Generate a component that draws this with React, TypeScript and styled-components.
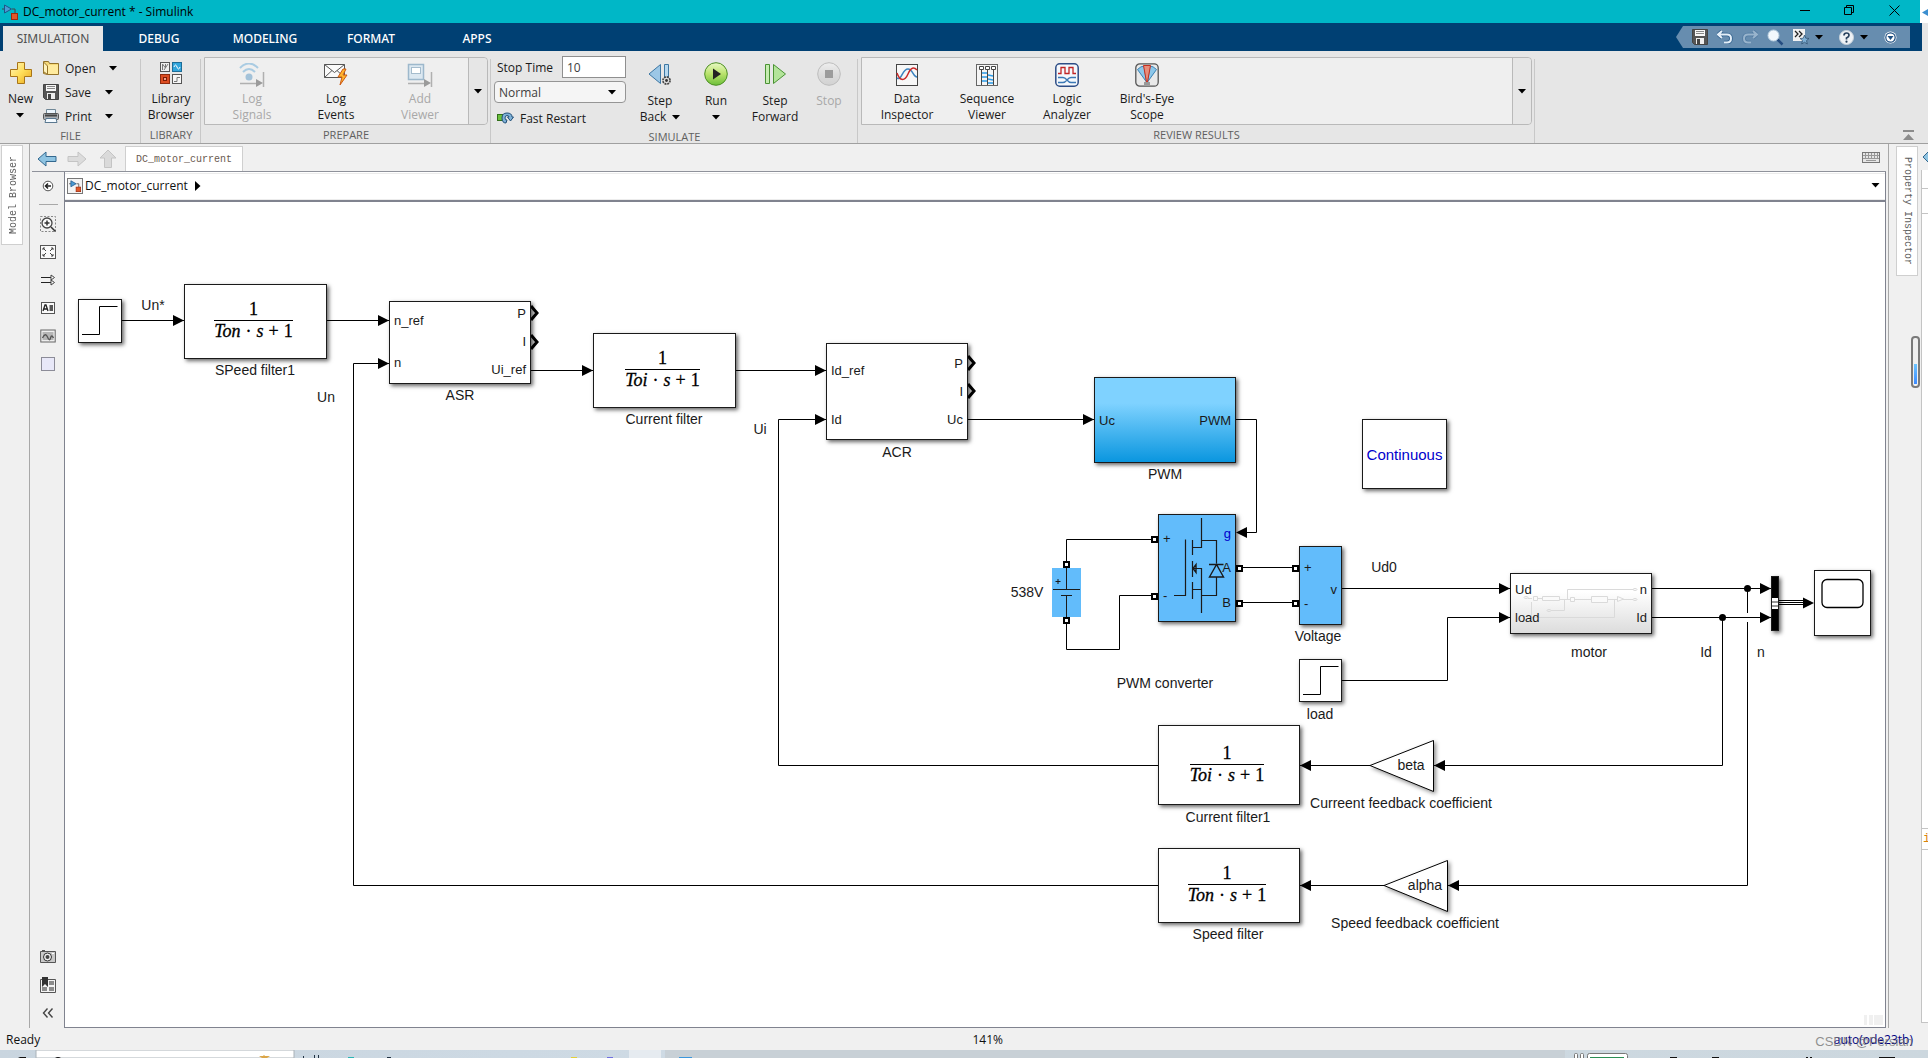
import React from "react";
import styled, { createGlobalStyle } from "styled-components";

const UI = '"Open Sans", "Noto Sans", sans-serif';
const MONO = '"Liberation Mono", monospace';
const SANS = '"Liberation Sans", Arial, sans-serif';
const SERIF = '"Liberation Serif", "Times New Roman", serif';

const Global = createGlobalStyle`
  *, *::before, *::after { box-sizing: border-box; }
  html, body { margin: 0; padding: 0; overflow: hidden; }
  body { font-family: ${UI}; font-size: 12px; color: #1a1a1a; background: #f0f0f0; }
  button, input, select { font: inherit; color: inherit; margin: 0; }
  button { padding: 0; border: 0; background: none; cursor: default; }
  svg { display: block; flex: none; }
`;

/* ---------- shell ---------- */

const Desktop = styled.div`
  display: flex;
  flex-direction: column;
  height: 100vh;
  overflow: hidden;
`;

const Windows = styled.div`
  display: flex;
  flex: 1;
  min-height: 0;
`;

const AppWindow = styled.main`
  display: flex;
  flex-direction: column;
  flex: 1;
  min-width: 0;
  background: #f0f0f0;
`;

const TitleBar = styled.header`
  display: flex;
  align-items: center;
  height: 23px;
  flex: none;
  padding-left: 2px;
  gap: 5px;
  background: #00b7c7;
  color: #000;
`;

const WindowTitle = styled.h1`
  flex: 1;
  margin: 0;
  font-size: 12px;
  line-height: 20px;
  font-weight: 400;
`;

const WindowButton = styled.button`
  display: flex;
  align-items: center;
  justify-content: center;
  width: 45px;
  height: 20px;
  align-self: flex-start;
`;

const WindowButtons = styled.div`
  display: flex;
  height: 23px;
  padding-right: 3px;
`;

const TabBar = styled.div`
  display: flex;
  align-items: flex-end;
  height: 28px;
  flex: none;
  padding: 0 10px 0 3px;
  gap: 6px;
  background: #004073;
`;

const Tab = styled.button<{ $active?: boolean }>`
  width: 100px;
  height: 25px;
  line-height: 23px;
  font-family: "Noto Sans", sans-serif;
  font-size: 12px;
  font-weight: ${(p) => (p.$active ? 400 : 500)};
  color: ${(p) => (p.$active ? "#505050" : "#fff")};
  background: ${(p) => (p.$active ? "#e6e6e6" : "transparent")};
`;

const Spacer = styled.div`
  flex: 1;
`;

const QuickAccess = styled.div`
  display: flex;
  align-items: center;
  align-self: center;
  height: 22px;
  padding: 0 13px 0 16px;
  gap: 9px;
  background: #678daf;
  clip-path: polygon(7px 0, 100% 0, 100% 100%, 7px 100%, 0 50%);
`;

const QuickButton = styled.button<{ $split?: boolean }>`
  display: flex;
  align-items: center;
  gap: 6px;
  padding-right: ${(p) => (p.$split ? "7px" : "0")};
`;

/* ---------- ribbon ---------- */

const Ribbon = styled.div`
  display: flex;
  height: 93px;
  flex: none;
  background: #e6e6e6;
  border-bottom: 1px solid #a0a0a0;
`;

const Section = styled.section<{ $width: number }>`
  display: flex;
  flex-direction: column;
  width: ${(p) => p.$width}px;
  padding-top: 5px;
  background: linear-gradient(#c8c8c8, #c8c8c8) right 8px / 1px 100% no-repeat;
`;

const SectionBody = styled.div<{ $pad?: number }>`
  display: flex;
  height: 73px;
  padding: 0 ${(p) => p.$pad ?? 0}px;
`;

const SectionTitle = styled.h2`
  margin: 0;
  text-align: center;
  font-size: 11px;
  line-height: 16px;
  font-weight: 400;
  color: #606060;
`;

const BigButton = styled.button<{ $width: number; $low?: boolean }>`
  display: flex;
  flex-direction: column;
  align-items: center;
  width: ${(p) => p.$width}px;
  padding-top: ${(p) => (p.$low ? "6px" : "4px")};
  gap: ${(p) => (p.$low ? "7px" : "4px")};
  line-height: 16px;
  color: #1a1a1a;
  &:disabled { color: #a8a8a8; }
`;

const BigLabel = styled.span`
  display: flex;
  flex-direction: column;
  align-items: center;
  white-space: nowrap;
`;

const LabelRow = styled.span`
  display: flex;
  align-items: center;
  justify-content: center;
  gap: 6px;
  height: 16px;
`;

const FileList = styled.div`
  display: flex;
  flex-direction: column;
  margin-left: 2px;
`;

const FileRow = styled.div<{ $wide?: boolean }>`
  display: grid;
  grid-template-columns: ${(p) => (p.$wide ? 66 : 62)}px 16px;
  align-items: center;
  height: 24px;
`;

const SmallButton = styled.button`
  display: flex;
  align-items: center;
  gap: 6px;
  height: 24px;
  text-align: left;
`;

const Gallery = styled.div`
  display: flex;
  flex: 1;
  height: 68px;
  margin-top: 1px;
  border: 1px solid #b9b9b9;
  border-radius: 0 4px 4px 0;
  background: #efefef;
`;

const GalleryItems = styled.div`
  display: flex;
  flex: 1;
  padding: 1px 5px 0;
`;

const GalleryMore = styled.button`
  display: flex;
  align-items: center;
  justify-content: center;
  width: 19px;
  border-left: 1px solid #b9b9b9;
  background: #e6e6e6;
  border-radius: 0 4px 4px 0;
`;

const SimForm = styled.div`
  display: flex;
  flex-direction: column;
  width: 132px;
  margin-right: 4px;
  gap: 3px;
`;

const StopRow = styled.div`
  display: flex;
  align-items: center;
  justify-content: space-between;
  padding-left: 3px;
`;

const StopInput = styled.input`
  width: 64px;
  height: 22px;
  padding: 0 4px;
  border: 1px solid #8f8f8f;
  background: #fff;
  color: #404040;
`;

const SelectWrap = styled.div`
  display: grid;
  grid-template-columns: 1fr 18px;
  align-items: center;
  height: 22px;
  svg { grid-area: 1 / 2; pointer-events: none; }
`;

const ModeSelect = styled.select`
  grid-area: 1 / 1 / 2 / 3;
  height: 22px;
  padding: 0 4px;
  appearance: none;
  border: 1px solid #959595;
  border-radius: 4px;
  background: #f5f5f5;
  color: #404040;
`;

const CollapseButton = styled.button`
  align-self: flex-end;
  padding: 0 6px 3px 0;
`;

/* ---------- workspace ---------- */

const Workspace = styled.div`
  display: flex;
  flex: 1;
  min-height: 0;
`;

const Rail = styled.aside<{ $side: "left" | "right" }>`
  display: flex;
  width: ${(p) => (p.$side === "left" ? 30 : 32)}px;
  flex: none;
  padding: ${(p) => (p.$side === "left" ? "1px 0 0 1px" : "2px 0 0 7px")};
  border-${(p) => (p.$side === "left" ? "right" : "left")}: 1px solid #a8a8a8;
`;

const RailTab = styled.button<{ $up?: boolean }>`
  width: 22px;
  height: ${(p) => (p.$up ? 100 : 130)}px;
  padding-right: ${(p) => (p.$up ? 4 : 0)}px;
  border: 1px solid #cfcfcf;
  background: #fff;
  font-family: ${MONO};
  font-size: 10px;
  line-height: 16px;
  color: #606060;
  writing-mode: vertical-rl;
  rotate: ${(p) => (p.$up ? "180deg" : "0deg")};
`;

const Center = styled.div`
  display: flex;
  flex-direction: column;
  flex: 1;
  min-width: 0;
  padding: 0 2px;
`;

const NavRow = styled.div`
  display: flex;
  align-items: flex-end;
  height: 28px;
  flex: none;
  padding: 0 6px 0 5px;
  border-bottom: 1px solid #8f929b;
`;

const NavButton = styled.button<{ $w: number }>`
  display: flex;
  align-items: center;
  width: ${(p) => p.$w}px;
  height: 24px;
`;

const DocTab = styled.button`
  width: 118px;
  height: 25px;
  border: 1px solid #cfcfcf;
  border-bottom: 0;
  background: #fff;
  font-family: ${MONO};
  font-size: 10px;
  color: #6a5a50;
`;

const KeyboardButton = styled.button`
  align-self: center;
`;

const EditorRow = styled.div`
  display: flex;
  flex: 1;
  min-height: 0;
`;

const Palette = styled.div`
  display: flex;
  flex-direction: column;
  align-items: center;
  width: 32px;
  flex: none;
  padding-bottom: 1px;
`;

const PaletteButton = styled.button`
  display: flex;
  align-items: center;
  justify-content: center;
  width: 28px;
  height: 28px;
`;

const PaletteRule = styled.hr`
  width: 19px;
  margin: 4px 0 5px;
  border: 0;
  border-top: 1px solid #a8a8a8;
`;

const Editor = styled.div`
  display: flex;
  flex-direction: column;
  flex: 1;
  min-width: 0;
  border: 1px solid #80838f;
  border-top: 0;
`;

const Crumbs = styled.nav`
  display: flex;
  align-items: center;
  height: 30px;
  flex: none;
  padding: 0 5px 1px 2px;
  gap: 2px;
  background: #fff;
  border-bottom: 2px solid #80838f;
  box-shadow: inset 0 1px 0 #fff, inset 0 2px 0 #ececec, inset 0 -1px 0 #ececec;
`;

const Crumb = styled.a`
  margin-right: 5px;
  color: #101010;
  text-decoration: none;
  font-size: 12px;
`;

const StatusBar = styled.footer`
  display: grid;
  grid-template-columns: 102fr 100fr;
  align-items: center;
  height: 22px;
  flex: none;
  padding-left: 6px;
  color: #101010;
`;

const StatusEnd = styled.div`
  display: flex;
  justify-content: space-between;
  position: relative;
  padding-right: 7px;
`;

const Solver = styled.a`
  color: #000080;
  text-decoration: none;
`;

const Watermark = styled.span`
  position: absolute;
  right: 7px;
  top: 4px;
  font-family: ${SANS};
  font-size: 13px;
  line-height: 14px;
  color: rgba(110, 110, 110, 0.75);
`;

/* ---------- diagram ---------- */

const SCROLL = { x: 65, y: 202 };

const Canvas = styled.div`
  position: relative;
  flex: 1;
  min-height: 0;
  overflow: hidden;
  background: #fff;
  font-family: ${SANS};
  color: #1a1a1a;
`;

const WireLayer = styled.svg`
  position: absolute;
  left: 0;
  top: 0;
`;

const ResizeGrip = styled.svg`
  position: absolute;
  right: 2px;
  bottom: 2px;
`;

type BoxProps = { $x: number; $y: number; $w: number; $h: number; $fill?: string; $frameless?: boolean };

const Block = styled.div<BoxProps>`
  position: absolute;
  left: ${(p) => p.$x - SCROLL.x}px;
  top: ${(p) => p.$y - SCROLL.y}px;
  width: ${(p) => p.$w}px;
  height: ${(p) => p.$h}px;
  display: flex;
  align-items: center;
  justify-content: center;
  background: ${(p) => p.$fill ?? "#fff"};
  border: ${(p) => (p.$frameless ? "0" : "1px solid #1a1a1a")};
  box-shadow: ${(p) => (p.$frameless ? "none" : "2px 2px 4px rgba(0, 0, 0, 0.6)")};
`;

const Label = styled.span<{ $x: number; $y: number }>`
  position: absolute;
  left: ${(p) => p.$x - SCROLL.x}px;
  top: ${(p) => p.$y - SCROLL.y}px;
  transform: translate(-50%, -50%);
  font-size: 14px;
  line-height: 16px;
  white-space: nowrap;
`;

const Port = styled.span<{ $y: number; $out?: boolean; $blue?: boolean }>`
  position: absolute;
  ${(p) => (p.$out ? "right" : "left")}: 4px;
  top: ${(p) => p.$y - 8}px;
  font-size: 13px;
  line-height: 16px;
  color: ${(p) => (p.$blue ? "#0000cc" : "inherit")};
`;

const Annotation = styled.span`
  font-size: 15px;
  color: #0000cc;
`;

const Fraction = styled.div`
  display: flex;
  flex-direction: column;
  align-items: center;
  padding: 0 4px 4px 0;
  font-family: ${SERIF};
  font-size: 18px;
  line-height: 22px;
  color: #000;
  -webkit-text-stroke: 0.3px #000;
`;

const Denominator = styled.div`
  display: flex;
  gap: 5px;
  line-height: 20px;
  border-top: 1px solid #000;
`;

const Overlay = styled.svg`
  position: absolute;
  left: 0;
  top: 0;
`;

/* ---------- neighbours of the window ---------- */

const Neighbour = styled.div`
  display: flex;
  flex-direction: column;
  width: 8px;
  flex: none;
  overflow: hidden;
  background: #f0f0f0;
`;

const Strip = styled.div<{ $h: number; $bg: string }>`
  height: ${(p) => p.$h}px;
  flex: none;
  background: ${(p) => p.$bg};
`;

const NeighbourPane = styled.div<{ $grow?: boolean; $h?: number }>`
  ${(p) => (p.$grow ? "flex: 1;" : `height: ${p.$h}px;`)}
  margin-left: 1px;
  padding-left: 1px;
  border-left: 1px solid #c4c4c4;
  border-bottom: 1px solid #c4c4c4;
  background: #fff;
  font-family: ${MONO};
  font-size: 12px;
  line-height: 20px;
  color: #d9820a;
`;

const Grip = styled.div`
  position: absolute;
  right: 8px;
  top: 336px;
  width: 9px;
  height: 52px;
  padding: 26px 1px 2px;
  border: 2px solid #7a7a7a;
  border-radius: 4px;
  background: #f0f0f0;
  &::before { content: ""; display: block; height: 20px; background: linear-gradient(#6cc4ff, #3d8bff); }
`;

const TaskBar = styled.div`
  display: flex;
  height: 8px;
  flex: none;
  overflow: hidden;
  background: linear-gradient(90deg, #c9d5df, #cfdbe5 40%, #ccd7de);
`;

/* ---------- icons ---------- */

const Caret = ({ w = 8 }: { w?: number }) => (
  <svg width={w} height="5" viewBox="0 0 8 5"><path d="M0 0h8L4 4.500z" fill="#000" /></svg>
);

const ModelIcon = ({ framed }: { framed?: boolean }) => (
  <svg width="16" height="16" viewBox="0 0 16 16">
    {framed && <rect x=".5" y=".5" width="15" height="15" fill="#f4f4f4" stroke="#777" />}
    <g transform={framed ? "translate(2 2) scale(.75)" : undefined}>
      <path d="M0 5h3M10 5h3v5" fill="none" stroke="#444" />
      <path d="M2.500 1v8L9.500 5z" fill="#4a9bd4" stroke="#1d5688" />
      <rect x="9.500" y="9.500" width="6" height="6" fill="#e0592a" stroke="#a02a0c" />
    </g>
  </svg>
);

const PlusIcon = () => (
  <svg width="22" height="22" viewBox="0 0 22 22">
    <defs><linearGradient id="gold" x1="0" y1="0" x2="1" y2="1"><stop offset="0" stopColor="#fff6c0" /><stop offset=".5" stopColor="#ffdf5a" /><stop offset="1" stopColor="#e8a51d" /></linearGradient></defs>
    <path d="M7.500 .5h7v7h7v7h-7v7h-7v-7h-7v-7h7z" fill="url(#gold)" stroke="#a87518" />
  </svg>
);

const FolderIcon = () => (
  <svg width="16" height="14" viewBox="0 0 16 14">
    <path d="M.5 12.500V.5h5l1 2h9v11h-11z" fill="#f5d97a" stroke="#94732a" />
    <path d="M.5 1l4 4v8.500l-4-3z" fill="#fff3bd" stroke="#94732a" /><path d="M5 4h10v9H5z" fill="#ffeb9e" />
  </svg>
);

const DiskIcon = () => (
  <svg width="16" height="16" viewBox="0 0 16 16">
    <path d="M.5.5h15v15h-13l-2-2z" fill="#555" stroke="#444" />
    <rect x="3" y="1" width="10" height="6" fill="#f7f7f7" /><path d="M4 2.500h8M4 4.500h8" stroke="#888" />
    <rect x="4" y="9" width="8" height="6" fill="#eee" /><rect x="5" y="10" width="3" height="5" fill="#444" />
  </svg>
);

const PrintIcon = () => (
  <svg width="16" height="14" viewBox="0 0 16 14">
    <path d="M3.500 5V.5h9V5" fill="#eaf4fc" stroke="#6f8796" />
    <rect x=".5" y="4.500" width="15" height="6" rx="1" fill="#a9adb2" stroke="#555" /><path d="M2 6.500h12" stroke="#444" strokeWidth="2" />
    <path d="M3 9.500h10l1 4H2z" fill="#f4faff" stroke="#5a7890" />
  </svg>
);

const LibraryIcon = () => (
  <svg width="22" height="22" viewBox="0 0 22 22">
    <rect x=".5" y=".5" width="9" height="9" fill="#eee" stroke="#555" /><path d="M2.500 8V2l3 4V2M8 2L4 8" fill="none" stroke="#777" />
    <rect x="12.500" y=".5" width="9" height="9" fill="#31a5dc" stroke="#1c6c97" /><path d="M14 5q1.500-4 3 0t3 0" fill="none" stroke="#fff" />
    <rect x=".5" y="12.500" width="9" height="9" fill="#dd4d22" stroke="#8f2b0e" /><rect x="3.500" y="15.500" width="3" height="3" fill="#f5a08a" stroke="#7d1c05" />
    <rect x="12.500" y="12.500" width="9" height="9" fill="#f6f6f6" stroke="#555" /><path d="M14 19.500h3v-4h3" fill="none" stroke="#777" />
  </svg>
);

const LogSignalsIcon = () => (
  <svg width="26" height="24" viewBox="0 0 26 24" fill="none">
    <circle cx="10" cy="14" r="3.500" fill="#a3c2d9" />
    <path d="M4 9q6-6 12 0M1 5q9-9 18 0" stroke="#a9cbe2" strokeWidth="2" />
    <path d="M1 20.500h17M24.500 9v15" stroke="#b0b0b0" strokeWidth="1.500" /><path d="M17 16v8l7-4z" fill="#9b9b9b" />
  </svg>
);

const LogEventsIcon = () => (
  <svg width="26" height="24" viewBox="0 0 26 24">
    <path d="M1.500 1.500h20v13h-20z" fill="#fafafa" stroke="#555" /><path d="M1.500 1.500l10 8 10-8M1.500 14.500l7.500-7M21.500 14.500l-7.500-7" fill="none" stroke="#555" />
    <path d="M20 6l-5 8h4l-2 8 7-10h-4l3-6z" fill="#ffb52e" stroke="#cc5a14" />
  </svg>
);

const AddViewerIcon = () => (
  <svg width="26" height="24" viewBox="0 0 26 24" fill="none">
    <rect x="1.500" y="1.500" width="15" height="15" fill="#dce8f1" stroke="#9db8cc" strokeWidth="1.500" /><rect x="4.500" y="4.500" width="9" height="6" fill="#fff" stroke="#a5bccd" />
    <path d="M1 20.500h17M24.500 9v15" stroke="#b0b0b0" strokeWidth="1.500" /><path d="M17 16v8l7-4z" fill="#9b9b9b" />
  </svg>
);

const FastRestartIcon = () => (
  <svg width="17" height="12" viewBox="0 0 17 12">
    <rect x=".5" y="2.500" width="5" height="6" fill="#6cc03c" stroke="#32701a" />
    <path d="M5 6q0-5 5-5 5 0 5 4h1.500l-3 4-3-4H12q0-1.500-2-1.500T8 6t2 2l-1 3Q5 11 5 6z" fill="#7fb2d8" stroke="#235078" />
  </svg>
);

const StepBackIcon = () => (
  <svg width="24" height="24" viewBox="0 0 24 24">
    <path d="M12.500 2.500v19L1 12z" fill="#9cc7e6" stroke="#3d77a3" /><path d="M16.500 2.500h4v14h-4z" fill="#b7d8ef" stroke="#3d77a3" />
    <circle cx="18.500" cy="18.500" r="3.600" fill="#ddd" stroke="#444" strokeWidth="1.600" strokeDasharray="2 .8" /><circle cx="18.500" cy="18.500" r="1.400" fill="#333" />
  </svg>
);

const RunIcon = ({ off }: { off?: boolean }) => (
  <svg width="24" height="24" viewBox="0 0 24 24">
    <defs>
      <linearGradient id={off ? "ballOff" : "ballOn"} x1="0" y1="0" x2="0" y2="1">
        <stop offset="0" stopColor={off ? "#eee" : "#e9f9c4"} /><stop offset=".5" stopColor={off ? "#dcdcdc" : "#b9e26b"} /><stop offset="1" stopColor={off ? "#d2d2d2" : "#6cbf3a"} />
      </linearGradient>
    </defs>
    <circle cx="12" cy="12" r="11.300" fill={off ? "url(#ballOff)" : "url(#ballOn)"} stroke={off ? "#bdbdbd" : "#4d8f24"} />
    {off ? <rect x="8" y="8" width="8" height="8" fill="#9c9c9c" /> : <path d="M9 6.500v11l8-5.500z" fill="#222" />}
  </svg>
);

const StepForwardIcon = () => (
  <svg width="24" height="24" viewBox="0 0 24 24">
    <path d="M2.500 2.500h4v19h-4z" fill="#c5ecb0" stroke="#4a9334" /><path d="M10.500 2.500v19L22.500 12z" fill="#b3e49a" stroke="#4a9334" />
  </svg>
);

const InspectorIcon = () => (
  <svg width="24" height="24" viewBox="0 0 24 24" fill="none">
    <rect x="1.500" y="1.500" width="21" height="21" fill="#f7f7f7" stroke="#444" />
    <path d="M2 15c5 3 5-9 11-9 5 0 5 8 9 8" stroke="#3b83c0" strokeWidth="1.500" /><path d="M2 10c3 9 8 8 11 1s6-7 9-4" stroke="#c92a2a" strokeWidth="1.500" />
  </svg>
);

const SequenceIcon = () => (
  <svg width="24" height="24" viewBox="0 0 24 24" fill="none">
    <rect x="1.500" y="1.500" width="21" height="21" fill="#f5f5f5" stroke="#666" />
    <path d="M6.500 7v15M12.500 7v15M18.500 7v15" stroke="#444" /><path d="M4.500 3.500h4v3h-4zM10.500 3.500h4v3h-4zM16.500 3.500h4v3h-4z" fill="#fff" stroke="#444" />
    <path d="M7 10h5M7 14h5M7 18h5M13 12l5 1M13 16l5 1M13 20h5" stroke="#2a9be8" strokeWidth="1.500" />
  </svg>
);

const LogicIcon = () => (
  <svg width="24" height="24" viewBox="0 0 24 24" fill="none">
    <rect x=".8" y=".8" width="22.400" height="22.400" rx="4" fill="#f5f8fc" stroke="#2d4d86" strokeWidth="1.500" />
    <path d="M3 10.500h3v-6h4v6h4v-6h4v6h3" stroke="#c02525" strokeWidth="1.300" /><path d="M3 14.500h5q2 0 4 2.500t4 2.500h5M3 19.500h5q2 0 4-2.500t4-2.500h5" stroke="#3b78b5" strokeWidth="1.300" />
  </svg>
);

const BirdsEyeIcon = () => (
  <svg width="24" height="24" viewBox="0 0 24 24" fill="none">
    <rect x=".8" y=".8" width="22.400" height="22.400" rx="4" fill="#e9e9e9" stroke="#555" strokeWidth="1.300" />
    <path d="M2.500 6.500Q6 3 9 3l2.500 16zM21.500 6.500Q18 3 15 3l-2.500 16z" fill="#8cc7ea" stroke="#3b83b5" />
    <path d="M8.500 2.500h7L12.500 19h-1z" fill="#e88c7a" stroke="#c43020" /><rect x="9" y="19" width="6" height="3" fill="#999" />
  </svg>
);

const UndoIcon = ({ dim }: { dim?: boolean }) => (
  <svg width="16" height="14" viewBox="0 0 16 14" fill="none" opacity={dim ? 0.4 : 1}>
    <g transform={dim ? "matrix(-1 0 0 1 16 0)" : undefined}>
      <path d="M5 1L1 4.500 5 8M2 4.500h8q4 0 4 4t-4 4H7" stroke="#2f5f8c" strokeWidth="3.600" />
      <path d="M5 1L1 4.500 5 8M2 4.500h8q4 0 4 4t-4 4H7" stroke="#e4eff8" strokeWidth="2" />
    </g>
  </svg>
);

const SearchIcon = () => (
  <svg width="17" height="17" viewBox="0 0 17 17"><path d="M10 10l5.500 5.500" stroke="#254d80" strokeWidth="2.500" /><circle cx="6.500" cy="6.500" r="5.500" fill="#f2f8fc" stroke="#b9cfe0" /></svg>
);

const ShortcutIcon = () => (
  <svg width="16" height="16" viewBox="0 0 16 16">
    <rect width="12" height="12" fill="#f2f2f2" /><path d="M2 2l3 3-3 3M6 2l3 3-3 3" fill="none" stroke="#222" strokeWidth="1.300" />
    <path d="M11.500 6l1.300 3.200 3.200.3-2.500 2.100.8 3.400-2.800-1.800-2.800 1.800.8-3.400L7 9.500l3.200-.3z" fill="#7fb0d6" stroke="#2c4c6a" strokeWidth=".7" />
  </svg>
);

const HelpIcon = () => (
  <svg width="15" height="15" viewBox="0 0 15 15"><circle cx="7.500" cy="7.500" r="7" fill="#eef2f5" stroke="#c8d2da" /><path d="M5 5.500q0-2.500 2.500-2.500T10 5.200Q10 6.700 7.500 8v1.500" fill="none" stroke="#26405c" strokeWidth="1.700" /><circle cx="7.500" cy="11.700" r="1.100" fill="#26405c" /></svg>
);

const MenuCircleIcon = () => (
  <svg width="13" height="13" viewBox="0 0 13 13"><circle cx="6.500" cy="6.500" r="6" fill="#fff" /><circle cx="6.500" cy="6.500" r="4.700" fill="#fff" stroke="#1d4e80" strokeWidth="1.200" /><path d="M3.500 5h6l-3 4z" fill="#1d4e80" /></svg>
);

const ArrowIcon = ({ blue }: { blue?: boolean }) => (
  <svg width="20" height="16" viewBox="0 0 20 16">
    <path d={blue ? "M1 8l8-7v4.500h10v5H9V15z" : "M19 8l-8-7v4.500H1v5h10V15z"} fill={blue ? "#8fc4e2" : "#dcdcdc"} stroke={blue ? "#33688f" : "#c4c4c4"} />
  </svg>
);

const UpIcon = () => (
  <svg width="18" height="20" viewBox="0 0 18 20"><path d="M9 1l8 8h-4.500v9.500h-7V9H1z" fill="#dadada" stroke="#c4c4c4" /></svg>
);

const KeyboardIcon = () => (
  <svg width="18" height="11" viewBox="0 0 18 11"><rect x=".5" y=".5" width="17" height="10" fill="#e6e6e6" stroke="#777" /><path d="M1 3.500h16M1 6.500h16M3.500 1v6M6.500 1v6M9.500 1v6M12.500 1v6M15.500 1v6M4 8.500h10" stroke="#999" /></svg>
);

const paletteIcons: { name: string; art: React.ReactNode }[] = [
  { name: "Fit to view", art: <><path d="M.5.5h15v15H.5z" fill="none" stroke="#888" strokeDasharray="2 1.500" /><circle cx="7" cy="7" r="5" fill="#fafafa" stroke="#444" strokeWidth="1.300" /><path d="M4.500 7h5M7 4.500v5M11 11l4.500 4.500" stroke="#333" strokeWidth="1.500" /></> },
  { name: "Zoom", art: <><rect x=".5" y="1.500" width="15" height="13" fill="#fafafa" stroke="#555" /><path d="M3 6V4h2M11 4h2v2M3 10v2h2M11 12h2v-2M3 4l3 3M13 4l-3 3M3 12l3-3M13 12l-3-3" fill="none" stroke="#444" /></> },
  { name: "Sample time", art: <><path d="M1 5.500h10M1 10.500h10" stroke="#222" /><path d="M11 3l3.500 2.500L11 8zM11 8l3.500 2.500L11 13z" fill="#fff" stroke="#444" /></> },
  { name: "Annotation", art: <><rect x="1.500" y="2.500" width="13" height="11" fill="#fafafa" stroke="#555" /><path d="M3 11l2-6h1l2 6M4 9h3M9.500 6h3.500M9.500 8h3.500M9.500 10h3.500" fill="none" stroke="#222" strokeWidth="1.300" /></> },
  { name: "Image", art: <><rect x=".8" y="2" width="14.400" height="12" fill="#eee" stroke="#666" /><rect x="2.500" y="4" width="11" height="8" fill="#b5b5b5" /><path d="M2.500 10q3-6 5-1t3 1 3 0" fill="none" stroke="#555" strokeWidth="1.300" /></> },
  { name: "Area", art: <rect x="1.500" y="1.500" width="13" height="13" fill="#e8e8f8" stroke="#8c8c98" /> },
];

const PaletteGlyph = ({ children }: { children: React.ReactNode }) => (
  <svg width="16" height="16" viewBox="0 0 16 16">{children}</svg>
);

/* ---------- diagram parts ---------- */

const TransferFn = ({ name }: { name: string }) => (
  <Fraction>
    <div>1</div>
    <Denominator><i>{name}</i><span>·</span><i>s</i><span>+</span><span>1</span></Denominator>
  </Fraction>
);

const StepArt = () => (
  <svg width="36" height="30" viewBox="0 0 36 30"><path d="M0 28.500h17.500v-28h18" fill="none" stroke="#000" /></svg>
);

const heads: Record<string, number> = { right: -11, left: 11 };

const Arrow = ({ x, y, dir = "right" }: { x: number; y: number; dir?: "left" | "right" }) => (
  <path d={`M${x} ${y}l${heads[dir]} -5.500v11z`} fill="#000" stroke="none" />
);

const wires = [
  "M122 320.500H184", "M327 320.500H389", "M531 370.500H593", "M736 370.500H826", "M968 419.500H1094",
  "M1236 419.500H1256.500V532.500H1240", "M1158 885.500H353.500V363.500H389", "M1158 765.500H778.500V419.500H826",
  "M1066.500 564V539.500H1153", "M1066.500 620V649.500H1119.500V595.500H1153", "M1240 567.500H1295", "M1240 602.500H1295",
  "M1342 588.500H1510", "M1342 680.500H1447.500V617.500H1510", "M1652 588.500H1771", "M1652 617.500H1771",
  "M1722.500 617V765.500H1434", "M1747.500 588V613M1747.500 622V885.500H1448", "M1370 765.500H1300", "M1384 885.500H1300",
];

const arrows: [number, number, ("left" | "right")?][] = [
  [184, 320.5], [389, 320.5], [389, 363.5], [593, 370.5], [826, 370.5], [826, 419.5], [1094, 419.5],
  [1236, 532.5, "left"], [1510, 588.5], [1510, 617.5], [1771, 588.5], [1771, 617.5], [1814, 603],
  [1300, 765.5, "left"], [1434, 765.5, "left"], [1300, 885.5, "left"], [1448, 885.5, "left"],
];

const terminals = [[1154, 539], [1154, 596], [1066, 564], [1066, 620], [1239, 568], [1239, 603], [1295, 568], [1295, 603]];
const openPorts = [[531, 313], [531, 342], [968, 363], [968, 391]];

const labels: [string, number, number][] = [
  ["Un*", 153, 305], ["SPeed filter1", 255, 370], ["Un", 326, 397], ["ASR", 460, 395], ["Current filter", 664, 419],
  ["Ui", 760, 429], ["ACR", 897, 452], ["PWM", 1165, 474], ["538V", 1027, 592], ["PWM converter", 1165, 683],
  ["Voltage", 1318, 636], ["Ud0", 1384, 567], ["load", 1320, 714], ["motor", 1589, 652], ["Id", 1706, 652],
  ["n", 1761, 652], ["Current filter1", 1228, 817], ["Curreent feedback coefficient", 1401, 803],
  ["Speed filter", 1228, 934], ["Speed feedback coefficient", 1415, 923],
];

const SKY = "#62bcfb";

const Diagram = () => (
  <Canvas>
    <WireLayer width="1820" height="825" viewBox="65 202 1820 825" fill="none" stroke="#000">
      {wires.map((d) => <path key={d} d={d} />)}
      {arrows.map(([x, y, dir]) => <Arrow key={`${x},${y}`} x={x} y={y} dir={dir} />)}
      <path d="M1779 600.500H1804M1779 602.500H1804M1779 604.500H1804" />
      <circle cx="1747.500" cy="588.500" r="3.500" fill="#000" stroke="none" />
      <circle cx="1722.500" cy="617.500" r="3.500" fill="#000" stroke="none" />
      {openPorts.map(([x, y]) => <path key={`${x},${y}`} d={`M${x} ${y - 7}l6 7-6 7`} strokeWidth="3" fill="#e0e0e0" />)}
      <g fill="#fff" style={{ filter: "drop-shadow(2px 2px 2px rgba(0,0,0,.45))" }}>
        <path d="M1370 765.500L1433.500 740.500V791.500z" />
        <path d="M1384 885.500L1447.500 860.500V911.500z" />
      </g>
    </WireLayer>

    <Block $x={78} $y={299} $w={44} $h={44}><StepArt /></Block>
    <Block $x={184} $y={284} $w={143} $h={75}><TransferFn name="Ton" /></Block>
    <Block $x={389} $y={301} $w={142} $h={83}>
      <Port $y={19}>n_ref</Port><Port $y={61}>n</Port>
      <Port $out $y={12}>P</Port><Port $out $y={40}>I</Port><Port $out $y={68}>Ui_ref</Port>
    </Block>
    <Block $x={593} $y={333} $w={143} $h={75}><TransferFn name="Toi" /></Block>
    <Block $x={826} $y={343} $w={142} $h={97}>
      <Port $y={27}>Id_ref</Port><Port $y={76}>Id</Port>
      <Port $out $y={20}>P</Port><Port $out $y={48}>I</Port><Port $out $y={76}>Uc</Port>
    </Block>
    <Block $x={1094} $y={377} $w={142} $h={86} $fill="linear-gradient(#7fd2ff 30%, #0a96df)">
      <Port $y={43}>Uc</Port><Port $out $y={43}>PWM</Port>
    </Block>
    <Block $x={1362} $y={419} $w={85} $h={70}><Annotation>Continuous</Annotation></Block>
    <Block $x={1052} $y={568} $w={29} $h={49} $fill={SKY} $frameless>
      <svg width="29" height="49" viewBox="0 0 29 49" fill="none" stroke="#1a1a1a">
        <path d="M14.500 0v21.500M1 21.500h27M9 27.500h11M14.500 27v22M3.500 13.500h5M6 11v5" />
      </svg>
    </Block>
    <Block $x={1158} $y={514} $w={78} $h={108} $fill={SKY}>
      <Overlay width="76" height="106" viewBox="1 1 76 106" fill="none" stroke="#1a1a1a">
        <path d="M43.500 4v29.500h-9M43.500 99V54.500h-9M34.500 75.500h9M43.500 26.500h15v23M58.500 63v18.500h-15M16 81.500h11.500v-56M34.500 26v15M34.500 47v16M34.500 68v17" strokeWidth="1.200" />
        <path d="M51 50.500h14.500M58.500 50.500l-7 12.500h14zM35 54.500l3-4v8z" strokeWidth="1.400" />
      </Overlay>
      <Port $y={24}>+</Port><Port $y={81}>-</Port>
      <Port $out $blue $y={19}>g</Port><Port $out $y={53}>A</Port><Port $out $y={88}>B</Port>
    </Block>
    <Block $x={1299} $y={546} $w={43} $h={79} $fill={SKY}>
      <Port $y={21}>+</Port><Port $y={57}>-</Port><Port $out $y={43}>v</Port>
    </Block>
    <Block $x={1299} $y={659} $w={43} $h={43}><StepArt /></Block>
    <Block $x={1510} $y={573} $w={142} $h={61} $fill="linear-gradient(#fff 30%, #dcdcdc)">
      <Overlay width="140" height="58" viewBox="1 1 140 58" fill="none" stroke="#dadada">
        <path d="M18 25.500h4M28 25.500h4M49 26.500h11M57.500 26V16.500h66M65 26.500h16M98 26.500h9M113 26.500h10M41 37.500h13.500V27M104.500 27v17.500h-83V29" />
        <path d="M23.500 23.500h4v4h-4zM32.500 23.500h17v4h-17zM60.500 24.500h4v4h-4zM81.500 23.500h16v6h-16zM107.500 23.500v5l6-2.500z" fill="#fafafa" />
        <ellipse cx="16" cy="24.500" rx="2" ry="1" /><ellipse cx="39" cy="37.500" rx="2" ry="1" /><ellipse cx="125" cy="16.500" rx="2" ry="1" /><ellipse cx="125" cy="26.500" rx="2" ry="1" />
      </Overlay>
      <Port $y={16}>Ud</Port><Port $y={44}>load</Port><Port $out $y={16}>n</Port><Port $out $y={44}>Id</Port>
    </Block>
    <Block $x={1771} $y={576} $w={8} $h={55} $fill="linear-gradient(#000 21px, #fff 21px 24px, #999 24px 26px, #fff 26px 28px, #999 28px 30px, #fff 30px 32px, #000 32px)" />
    <Block $x={1814} $y={570} $w={57} $h={66}>
      <svg width="44" height="54" viewBox="0 0 44 54"><rect x="1" y="3.500" width="41" height="28" rx="5" fill="#fff" stroke="#000" strokeWidth="1.300" /></svg>
    </Block>
    <Block $x={1158} $y={725} $w={142} $h={80}><TransferFn name="Toi" /></Block>
    <Block $x={1158} $y={848} $w={142} $h={75}><TransferFn name="Ton" /></Block>

    <WireLayer width="1820" height="825" viewBox="65 202 1820 825" fill="#fff" stroke="#000" strokeWidth="2">
      {terminals.map(([x, y]) => <rect key={`${x},${y}`} x={x - 2} y={y - 2} width="5" height="5" />)}
    </WireLayer>
    <ResizeGrip width="19" height="10"><path d="M0 0h3v10H0zM5 0h4v10H5zM10 0h9v10h-9z" fill="#f0f0f0" /></ResizeGrip>

    {labels.map(([text, x, y]) => <Label key={text} $x={x} $y={y}>{text}</Label>)}
    <Label $x={1411} $y={765}>beta</Label>
    <Label $x={1425} $y={885}>alpha</Label>
  </Canvas>
);

/* ---------- page ---------- */

const tabs = ["SIMULATION", "DEBUG", "MODELING", "FORMAT", "APPS"];

const Big = ({ icon, lines, width, low, disabled, caret }: {
  icon: React.ReactNode; lines: string[]; width: number; low?: boolean; disabled?: boolean; caret?: "inline" | "below";
}) => (
  <BigButton $width={width} $low={low} disabled={disabled}>
    {icon}
    <BigLabel>
      {lines.map((l, i) => (
        <LabelRow key={l}>{l}{caret === "inline" && i === lines.length - 1 && <Caret />}</LabelRow>
      ))}
      {caret === "below" && <LabelRow><Caret /></LabelRow>}
    </BigLabel>
  </BigButton>
);

export default function App() {
  return (
    <Desktop>
      <Global />
      <Windows>
        <AppWindow>
          <TitleBar>
            <ModelIcon />
            <WindowTitle>DC_motor_current * - Simulink</WindowTitle>
            <WindowButtons>
              <WindowButton aria-label="Minimize"><svg width="10" height="10"><path d="M0 5.500h10" stroke="#000" /></svg></WindowButton>
              <WindowButton aria-label="Restore"><svg width="11" height="11" fill="none" stroke="#000"><path d="M.5 2.500h7v7h-7zM2.500 2V.5h7v7H8" /></svg></WindowButton>
              <WindowButton aria-label="Close"><svg width="11" height="11"><path d="M.5.5l10 10M10.500.5l-10 10" stroke="#000" /></svg></WindowButton>
            </WindowButtons>
          </TitleBar>

          <TabBar>
            {tabs.map((t, i) => <Tab key={t} $active={i === 0}>{t}</Tab>)}
            <Spacer />
            <QuickAccess>
              <QuickButton aria-label="Save"><DiskIcon /></QuickButton>
              <QuickButton aria-label="Undo"><UndoIcon /></QuickButton>
              <QuickButton aria-label="Redo"><UndoIcon dim /></QuickButton>
              <QuickButton aria-label="Search"><SearchIcon /></QuickButton>
              <QuickButton aria-label="Shortcuts" $split><ShortcutIcon /><Caret /></QuickButton>
              <QuickButton aria-label="Help" $split><HelpIcon /><Caret /></QuickButton>
              <QuickButton aria-label="Toolbar options"><MenuCircleIcon /></QuickButton>
            </QuickAccess>
          </TabBar>

          <Ribbon>
            <Section $width={141}>
              <SectionBody>
                <Big icon={<PlusIcon />} lines={["New"]} width={41} low caret="below" />
                <FileList>
                  <FileRow $wide><SmallButton><FolderIcon />Open</SmallButton><Caret /></FileRow>
                  <FileRow><SmallButton><DiskIcon />Save</SmallButton><Caret /></FileRow>
                  <FileRow><SmallButton><PrintIcon />Print</SmallButton><Caret /></FileRow>
                </FileList>
              </SectionBody>
              <SectionTitle>FILE</SectionTitle>
            </Section>

            <Section $width={60}>
              <SectionBody><Big icon={<LibraryIcon />} lines={["Library", "Browser"]} width={60} low /></SectionBody>
              <SectionTitle>LIBRARY</SectionTitle>
            </Section>

            <Section $width={290}>
              <SectionBody $pad={3}>
                <Gallery>
                  <GalleryItems>
                    <Big icon={<LogSignalsIcon />} lines={["Log", "Signals"]} width={84} disabled />
                    <Big icon={<LogEventsIcon />} lines={["Log", "Events"]} width={84} />
                    <Big icon={<AddViewerIcon />} lines={["Add", "Viewer"]} width={84} disabled />
                  </GalleryItems>
                  <GalleryMore aria-label="More prepare tools"><Caret /></GalleryMore>
                </Gallery>
              </SectionBody>
              <SectionTitle>PREPARE</SectionTitle>
            </Section>

            <Section $width={367}>
              <SectionBody $pad={3}>
                <SimForm>
                  <StopRow><label htmlFor="stop">Stop Time</label><StopInput id="stop" defaultValue="10" /></StopRow>
                  <SelectWrap>
                    <ModeSelect aria-label="Simulation mode" defaultValue="Normal"><option>Normal</option><option>Accelerator</option></ModeSelect>
                    <Caret />
                  </SelectWrap>
                  <StopRow><SmallButton><FastRestartIcon />Fast Restart</SmallButton></StopRow>
                </SimForm>
                <Big icon={<StepBackIcon />} lines={["Step", "Back"]} width={60} low caret="inline" />
                <Big icon={<RunIcon />} lines={["Run"]} width={52} low caret="below" />
                <Big icon={<StepForwardIcon />} lines={["Step", "Forward"]} width={66} low />
                <Big icon={<RunIcon off />} lines={["Stop"]} width={42} low disabled />
              </SectionBody>
              <SectionTitle>SIMULATE</SectionTitle>
            </Section>

            <Section $width={677}>
              <SectionBody $pad={3}>
                <Gallery>
                  <GalleryItems>
                    <Big icon={<InspectorIcon />} lines={["Data", "Inspector"]} width={80} />
                    <Big icon={<SequenceIcon />} lines={["Sequence", "Viewer"]} width={80} />
                    <Big icon={<LogicIcon />} lines={["Logic", "Analyzer"]} width={80} />
                    <Big icon={<BirdsEyeIcon />} lines={["Bird's-Eye", "Scope"]} width={80} />
                  </GalleryItems>
                  <GalleryMore aria-label="More review tools"><Caret /></GalleryMore>
                </Gallery>
              </SectionBody>
              <SectionTitle>REVIEW RESULTS</SectionTitle>
            </Section>
            <Spacer />
            <CollapseButton aria-label="Collapse ribbon">
              <svg width="11" height="10"><path d="M0 0h11v2H0zM0 10l5.500-6 5.500 6z" fill="#8c8c8c" /></svg>
            </CollapseButton>
          </Ribbon>

          <Workspace>
            <Rail $side="left"><RailTab $up>Model Browser</RailTab></Rail>
            <Center>
              <NavRow>
                <NavButton $w={30} aria-label="Back"><ArrowIcon blue /></NavButton>
                <NavButton $w={32} aria-label="Forward"><ArrowIcon /></NavButton>
                <NavButton $w={26} aria-label="Up"><UpIcon /></NavButton>
                <DocTab>DC_motor_current</DocTab>
                <Spacer />
                <KeyboardButton aria-label="Keyboard"><KeyboardIcon /></KeyboardButton>
              </NavRow>
              <EditorRow>
                <Palette>
                  <PaletteButton aria-label="Hide browser">
                    <svg width="12" height="12"><circle cx="6" cy="6" r="4.800" fill="#fff" stroke="#555" /><path d="M3.500 6H9M6 3.500L3.500 6 6 8.500" fill="none" stroke="#222" strokeWidth="1.500" /></svg>
                  </PaletteButton>
                  <PaletteRule />
                  {paletteIcons.map((p) => <PaletteButton key={p.name} aria-label={p.name}><PaletteGlyph>{p.art}</PaletteGlyph></PaletteButton>)}
                  <Spacer />
                  <PaletteButton aria-label="Screenshot">
                    <PaletteGlyph><path d="M.5 2.500h15v11H.5z" fill="#c9c9c9" stroke="#555" /><path d="M2 1h3v2H2z" fill="#555" /><circle cx="7.500" cy="8" r="4" fill="#eee" stroke="#333" /><circle cx="7.500" cy="8" r="2" fill="#444" /><path d="M12 4.500h2" stroke="#fff" /></PaletteGlyph>
                  </PaletteButton>
                  <PaletteButton aria-label="Bookmarks">
                    <PaletteGlyph><path d="M.5 2.500h15v13H.5z" fill="#f4f4f4" stroke="#555" /><path d="M9 4h5v4H9zM2 10h5v4H2zM9 10h5v4H9z" fill="#8c8c8c" /><path d="M2 0h6v10L5 7l-3 3z" fill="#333" /></PaletteGlyph>
                  </PaletteButton>
                  <PaletteButton aria-label="Collapse palette">
                    <PaletteGlyph><path d="M7.500 3.500L3.500 8l4 4.500M12.500 3.500L8.500 8l4 4.500" fill="none" stroke="#444" strokeWidth="1.400" /></PaletteGlyph>
                  </PaletteButton>
                </Palette>
                <Editor>
                  <Crumbs aria-label="Model path">
                    <ModelIcon framed />
                    <Crumb href="#">DC_motor_current</Crumb>
                    <svg width="6" height="10"><path d="M0 0l5.500 5L0 10z" fill="#000" /></svg>
                    <Spacer />
                    <Caret w={9} />
                  </Crumbs>
                  <Diagram />
                </Editor>
              </EditorRow>
            </Center>
            <Rail $side="right"><RailTab>Property Inspector</RailTab></Rail>
          </Workspace>

          <StatusBar>
            <span>Ready</span>
            <StatusEnd><span>141%</span><Solver href="#">auto(ode23tb)</Solver><Watermark>CSDN @Persian</Watermark></StatusEnd>
          </StatusBar>
        </AppWindow>

        <Neighbour>
          <Strip $h={23} $bg="#fff"><svg width="8" height="23"><path d="M8 9l-6 3.500 6 3.500z" fill="#3c8fd0" /></svg></Strip>
          <Strip $h={28} $bg="linear-gradient(90deg, #004073 2px, #e6e6e6 2px)" />
          <Strip $h={93} $bg="linear-gradient(#e6e6e6 92px, #a0a0a0 92px)" />
          <Strip $h={26} $bg="#f0f0f0"><svg width="8" height="26"><path d="M9 7l-6 6 6 6z" fill="#8fc4e2" stroke="#33688f" /></svg></Strip>
          <NeighbourPane $h={19} />
          <NeighbourPane $h={25} />
          <NeighbourPane $grow />
          <NeighbourPane $h={21}>i</NeighbourPane>
          <NeighbourPane $h={173} />
          <Strip $h={27} $bg="#f0f0f0" />
        </Neighbour>
      </Windows>
      <Grip />
      <TaskBar aria-hidden>
        <svg width="1928" height="8">
          <rect x="36" width="258" height="8" fill="#fff" stroke="#aab2b8" />
          <rect x="629" width="32" height="8" fill="#e6ebf0" /><rect x="665" width="900" height="8" fill="#c8d0d6" />
          <path d="M18 8l2-1h6v1zM55 8q3-2 6 0z" fill="#111" /><path d="M259 6h4l1-1 1 1h5l-3 2h-5z" fill="#dba648" />
          <path d="M303 6h1v2h-1zM314 5h1v3h-1zM318 5h1v3h-1zM387 7h4v1h-4z" fill="#234" /><path d="M348 7h6v1h-6z" fill="#2bb5b5" /><path d="M571 7h6v1h-6z" fill="#e3cf3a" /><path d="M607 7h6v1h-6z" fill="#7070e0" /><path d="M679 7h13v1h-13z" fill="#3c97dc" />
          <rect x="1574.500" y="3.500" width="3" height="6" rx="1" fill="#fff" stroke="#777" /><rect x="1580.500" y="3.500" width="3" height="6" rx="1" fill="#fff" stroke="#777" />
          <rect x="1587.500" y="3.500" width="40" height="8" rx="2" fill="#fff" stroke="#777" /><rect x="1590" y="7" width="34" height="1" fill="#2a8f55" />
          <path d="M1670 7h7v1h-7zM1712 7h7v1h-7zM1806 7h2v1h-2zM1810 7h2v1h-2zM1879 7h16v1h-16z" fill="#111" />
        </svg>
      </TaskBar>
    </Desktop>
  );
}
